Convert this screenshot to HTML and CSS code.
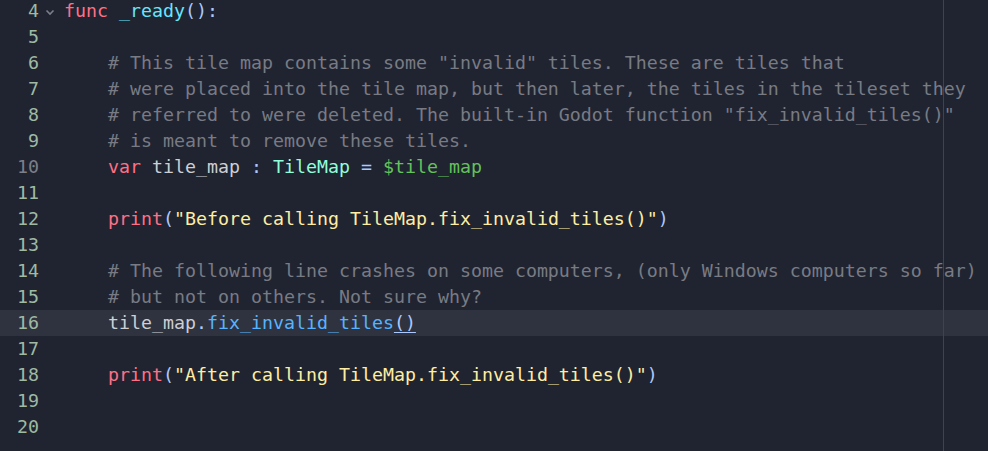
FILE: index.html
```html
<!DOCTYPE html>
<html>
<head>
<meta charset="utf-8">
<link rel="stylesheet" href="styles.css">
</head>
<body>
<div class="editor">
  <div class="guide"></div>
  <div class="row"><span class="ln">4</span><span class="fold"><svg width="10" height="8" viewBox="0 0 10 8"><path d="M1.5 2.5 L5 6 L8.5 2.5" fill="none" stroke="#7b7f8a" stroke-width="1.6"/></svg></span><span class="code"><span class="kw">func</span> <span class="fn">_ready</span><span class="sym">():</span></span></div>
  <div class="row"><span class="ln">5</span><span class="fold"></span><span class="code"></span></div>
  <div class="row"><span class="ln">6</span><span class="fold"></span><span class="code">    <span class="cm"># This tile map contains some "invalid" tiles. These are tiles that</span></span></div>
  <div class="row"><span class="ln">7</span><span class="fold"></span><span class="code">    <span class="cm"># were placed into the tile map, but then later, the tiles in the tileset they</span></span></div>
  <div class="row"><span class="ln">8</span><span class="fold"></span><span class="code">    <span class="cm"># referred to were deleted. The built-in Godot function "fix_invalid_tiles()"</span></span></div>
  <div class="row"><span class="ln">9</span><span class="fold"></span><span class="code">    <span class="cm"># is meant to remove these tiles.</span></span></div>
  <div class="row"><span class="ln unsafe">10</span><span class="fold"></span><span class="code">    <span class="kw">var</span> tile_map <span class="sym">:</span> <span class="ty">TileMap</span> <span class="sym">=</span> <span class="np">$tile_map</span></span></div>
  <div class="row"><span class="ln">11</span><span class="fold"></span><span class="code"></span></div>
  <div class="row"><span class="ln">12</span><span class="fold"></span><span class="code">    <span class="kw">print</span><span class="sym">(</span><span class="str">"Before calling TileMap.fix_invalid_tiles()"</span><span class="sym">)</span></span></div>
  <div class="row"><span class="ln">13</span><span class="fold"></span><span class="code"></span></div>
  <div class="row"><span class="ln">14</span><span class="fold"></span><span class="code">    <span class="cm"># The following line crashes on some computers, (only Windows computers so far)</span></span></div>
  <div class="row"><span class="ln">15</span><span class="fold"></span><span class="code">    <span class="cm"># but not on others. Not sure why?</span></span></div>
  <div class="row current"><span class="ln">16</span><span class="fold"></span><span class="code">    tile_map<span class="sym">.</span><span class="call">fix_invalid_tiles</span><span class="sym match">()</span></span></div>
  <div class="row"><span class="ln">17</span><span class="fold"></span><span class="code"></span></div>
  <div class="row"><span class="ln">18</span><span class="fold"></span><span class="code">    <span class="kw">print</span><span class="sym">(</span><span class="str">"After calling TileMap.fix_invalid_tiles()"</span><span class="sym">)</span></span></div>
  <div class="row"><span class="ln">19</span><span class="fold"></span><span class="code"></span></div>
  <div class="row"><span class="ln">20</span><span class="fold"></span><span class="code"></span></div>
</div>
</body>
</html>
```
FILE: styles.css
```css
html, body {
  margin: 0;
  padding: 0;
  background: #202431;
  overflow: hidden;
}
.editor {
  position: relative;
  width: 988px;
  height: 451px;
  overflow: hidden;
  background: #202431;
  font-family: "DejaVu Sans Mono", "Liberation Mono", monospace;
  font-size: 18.27px;
  color: #cdcfd3;
}
.row {
  display: flex;
  align-items: center;
  height: 26px;
  line-height: 26px;
  white-space: pre;
}
.row:first-of-type { margin-top: 0; }
.editor .row:nth-child(2) { margin-top: -2px; }
.row.current { background: #2f3340; }
.ln {
  width: 39px;
  text-align: right;
  color: #9fb9a2;
  flex: none;
}
.ln.unsafe { color: #7c7f88; }
.fold {
  width: 25px;
  flex: none;
  display: flex;
  justify-content: center;
  padding-right: 4px;
  box-sizing: border-box;
}
.fold svg { display: block; margin-top: 1px; }
.code { flex: none; }
.kw { color: #ff7085; }
.fn { color: #66e6ff; }
.sym { color: #abc9ff; }
.cm { color: #787b84; }
.ty { color: #8effda; }
.np { color: #63c259; }
.str { color: #ffeda1; }
.call { color: #57b3ff; }
.match { text-decoration: underline; text-underline-offset: 3px; }
.guide {
  position: absolute;
  left: 943px;
  top: 0;
  width: 1px;
  height: 451px;
  background: #3d4256;
  z-index: 2;
}
```
